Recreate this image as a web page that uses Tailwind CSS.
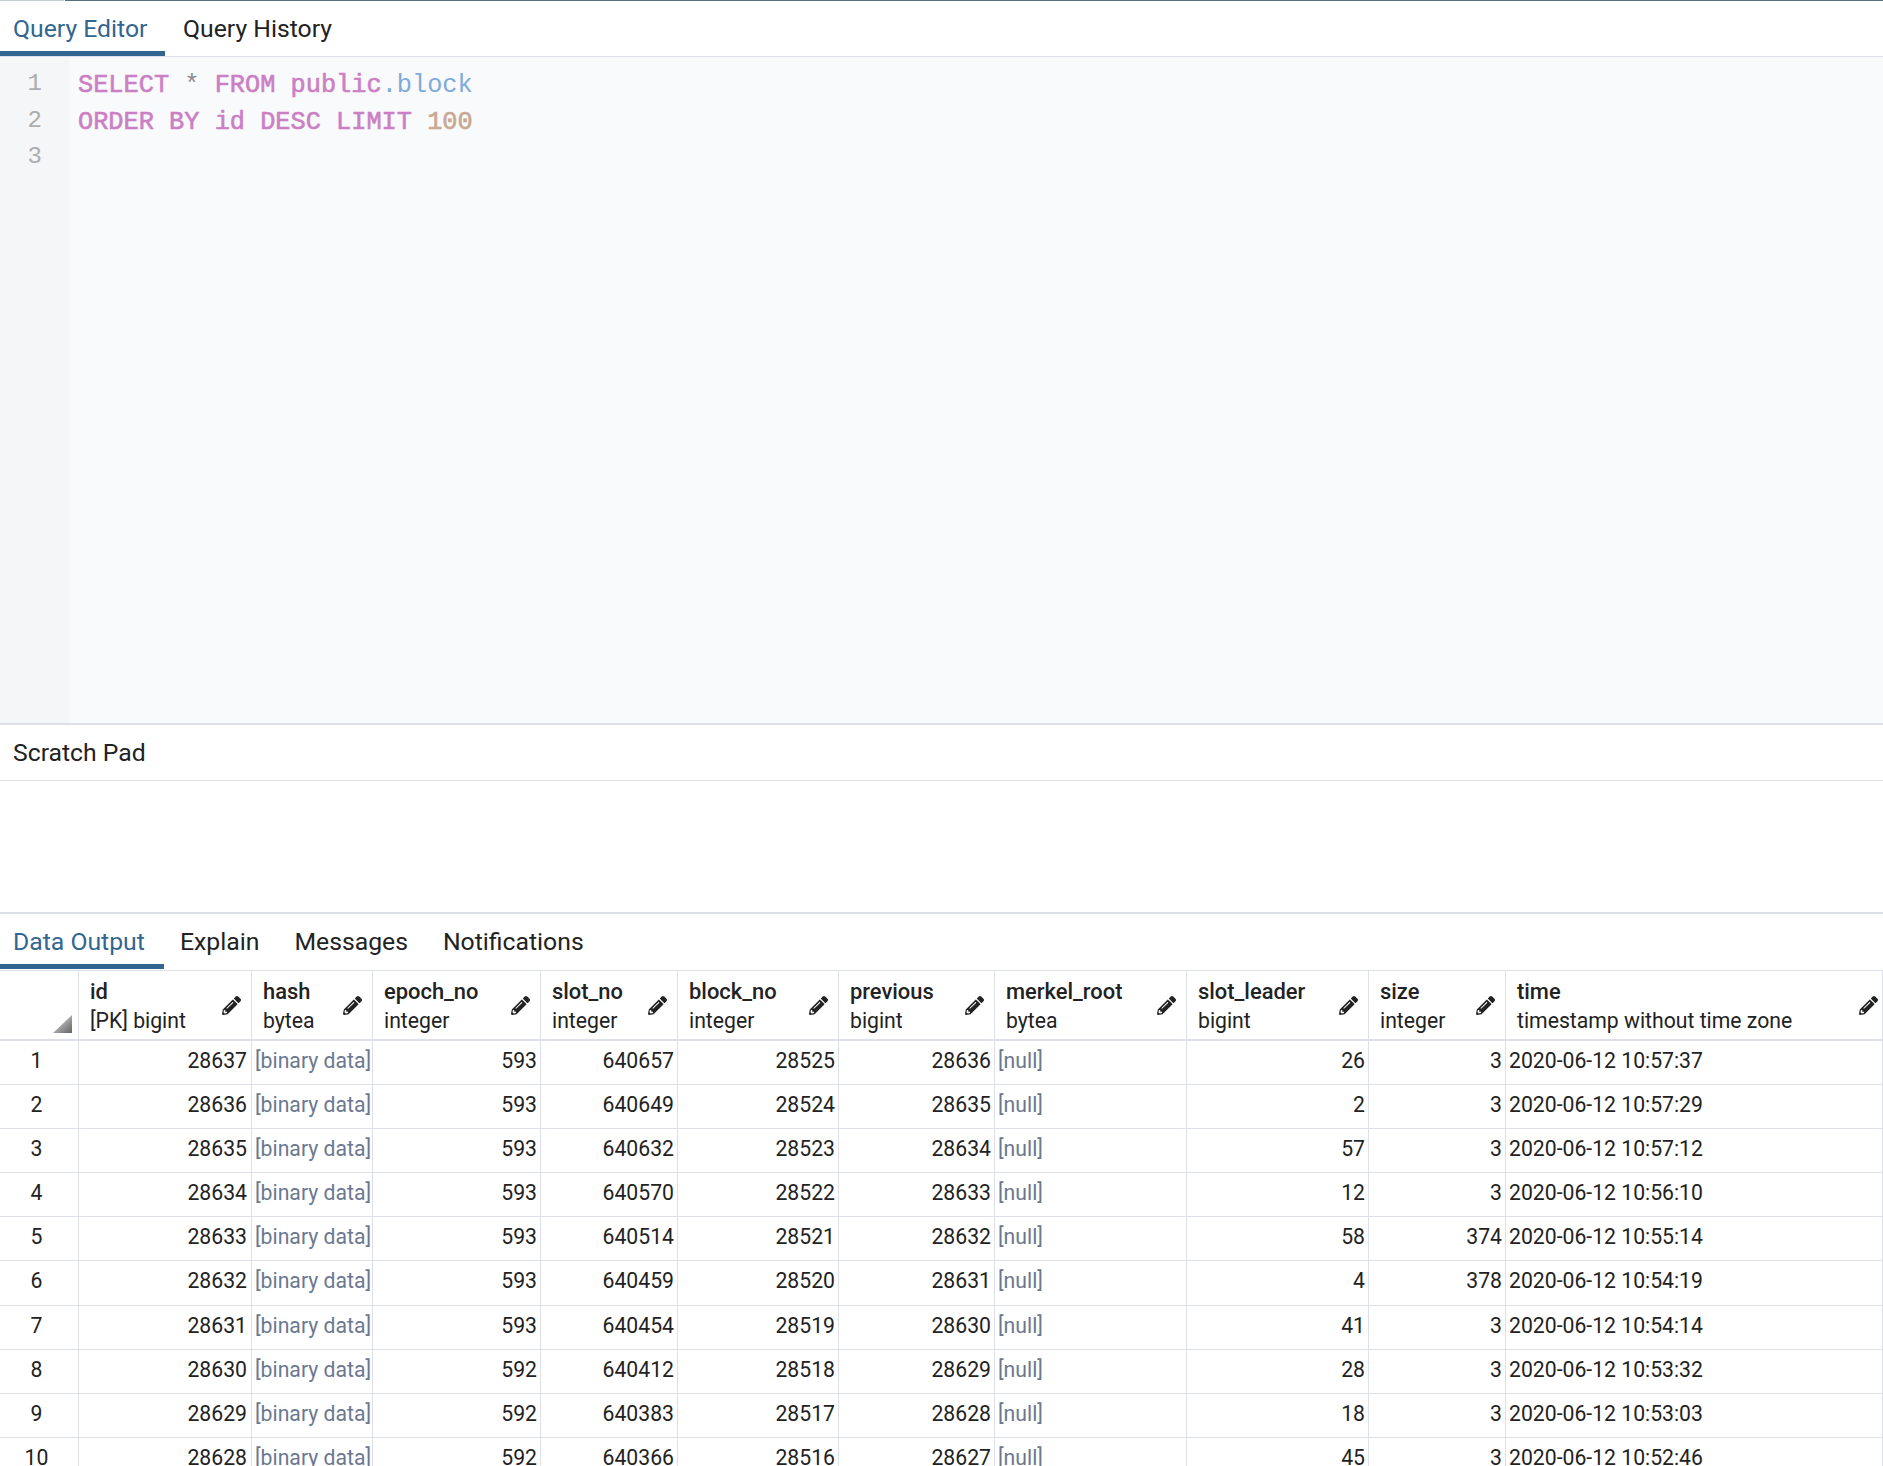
<!DOCTYPE html>
<html lang="en">
<head>
    <meta charset="UTF-8">
    <title>pgAdmin Query Tool</title>
    <script src="https://cdn.jsdelivr.net/npm/@tailwindcss/browser@4"></script>
</head>
<body class="bg-white overflow-hidden">
    <div class="w-[1883px] h-[1466px] overflow-hidden flex flex-col font-['Roboto',sans-serif] text-[#222222]">
        <!-- Top rule -->
        <div class="h-px shrink-0 flex">
            <div class="w-[64px] bg-[#c5ced6]"></div>
            <div class="w-px bg-white"></div>
            <div class="flex-1 bg-[#56707f]"></div>
        </div>

        <!-- Query tabs -->
        <div class="h-[56px] shrink-0 flex border-b border-[#dde0e8] text-[24.75px] leading-[56px]">
            <div class="w-[165px] h-[55px] pl-[13px] text-[#326690] border-b-[5px] border-[#326690] whitespace-nowrap">Query Editor</div>
            <div class="pl-[18px] h-[54px]">Query History</div>
        </div>

        <!-- Editor -->
        <div class="h-[666px] shrink-0 flex bg-[#f9fafc] font-['Liberation_Mono',monospace] text-[25.3px] leading-[36.5px]">
            <div class="w-[69px] bg-[#f5f6f8] pt-[9px] pr-[27px] text-right text-[#adadad] text-[24px]">
                <div>1</div>
                <div>2</div>
                <div>3</div>
            </div>
            <div class="pl-[9px] pt-[11px] text-[#cb7fc4] [-webkit-text-stroke:0.6px]">
                <div>SELECT <span class="text-[#8a8a8a] [-webkit-text-stroke:0px]">*</span> FROM public<span class="text-[#80abd8] [-webkit-text-stroke:0px]">.block</span></div>
                <div>ORDER BY id DESC LIMIT <span class="text-[#c7a892]">100</span></div>
            </div>
        </div>

        <!-- Scratch pad -->
        <div class="h-[58px] shrink-0 border-t-2 border-b border-[#dde0e8] pl-[13px] text-[24.75px] leading-[56px]">Scratch Pad</div>
        <div class="h-[131px] shrink-0"></div>

        <!-- Result tabs -->
        <div class="h-[58px] shrink-0 flex border-t-2 border-[#dde0e8] text-[24.75px] leading-[55px]">
            <div class="w-[164px] h-[55px] pl-[13px] text-[#326690] border-b-[5px] border-[#326690] whitespace-nowrap">Data Output</div>
            <div class="pl-[16px]">Explain</div>
            <div class="pl-[35px]">Messages</div>
            <div class="pl-[35px]">Notifications</div>
        </div>

        <!-- Data grid -->
        <table class="table-fixed w-[1883px] border-separate border-spacing-0 text-[21.2px]">
            <colgroup id="cols"></colgroup>
            <thead>
                <tr id="head" class="h-[71px]"></tr>
            </thead>
            <tbody id="rows"></tbody>
        </table>
    </div>

    <script>
        const widths = [79, 173, 121, 168, 137, 161, 156, 192, 182, 137, 377];
        const columns = [
            ['id', '[PK] bigint'], ['hash', 'bytea'], ['epoch_no', 'integer'], ['slot_no', 'integer'],
            ['block_no', 'integer'], ['previous', 'bigint'], ['merkel_root', 'bytea'], ['slot_leader', 'bigint'],
            ['size', 'integer'], ['time', 'timestamp without time zone']
        ];
        const data = [
            [28637, 593, 640657, 28525, 28636, 26, 3, '10:57:37'],
            [28636, 593, 640649, 28524, 28635, 2, 3, '10:57:29'],
            [28635, 593, 640632, 28523, 28634, 57, 3, '10:57:12'],
            [28634, 593, 640570, 28522, 28633, 12, 3, '10:56:10'],
            [28633, 593, 640514, 28521, 28632, 58, 374, '10:55:14'],
            [28632, 593, 640459, 28520, 28631, 4, 378, '10:54:19'],
            [28631, 593, 640454, 28519, 28630, 41, 3, '10:54:14'],
            [28630, 592, 640412, 28518, 28629, 28, 3, '10:53:32'],
            [28629, 592, 640383, 28517, 28628, 18, 3, '10:53:03'],
            [28628, 592, 640366, 28516, 28627, 45, 3, '10:52:46']
        ];

        const pencil = `<svg viewBox="0 0 512 512" class="w-[19px] h-[19px] shrink-0 -mt-[2px] fill-[#222222]"><path d="M497.9 142.1l-46.1 46.1c-4.7 4.7-12.3 4.7-17 0l-111-111c-4.7-4.7-4.7-12.3 0-17l46.1-46.1c18.7-18.7 49.1-18.7 67.9 0l60.1 60.1c18.8 18.7 18.8 49.1 0 67.9zM284.2 99.8L21.6 362.4.4 483.9c-2.9 16.4 11.4 30.6 27.8 27.8l121.5-21.3 262.6-262.6c4.3-4.3 4.3-11.3 0-15.6l-112.1-112.1c-4.7-4.3-11.7-4.3-16 0zM124.1 339.9c-5.5-5.5-5.5-14.3 0-19.8l154-154c5.5-5.5 14.3-5.5 19.8 0s5.5 14.3 0 19.8l-154 154c-5.5 5.5-14.3 5.5-19.8 0zM88 424h48v36.3l-64.5 11.3-31.1-31.1L51.7 376H88v48z"/></svg>`;
        const corner = `<svg viewBox="0 0 19 18" class="w-[19px] h-[18px] ml-auto"><defs><linearGradient id="fade" x1="0" y1="0" x2="1" y2="1"><stop offset="0.4" stop-color="#b4b4b4"/><stop offset="0.8" stop-color="#7c7c7c"/><stop offset="1" stop-color="#666666"/></linearGradient></defs><path d="M19 0V18H0Z" fill="url(#fade)"/></svg>`;

        document.getElementById('cols').innerHTML = widths.map(w => `<col style="width:${w}px">`).join('');

        const headCell = 'border-r border-t border-b-2 border-[#dde0e8]';
        document.getElementById('head').innerHTML =
            `<th class="${headCell} align-bottom pr-[6px] pb-[6px]">${corner}</th>` +
            columns.map(([name, type], i) =>
                `<th class="${headCell} text-left font-normal pl-[11px] ${i === 9 ? 'pr-[4px]' : 'pr-[10px]'}">
                    <div class="flex items-center justify-between pt-[2px]">
                        <div class="whitespace-nowrap leading-[29px]">
                            <div class="font-medium text-[21.9px]">${name}</div>
                            <div>${type}</div>
                        </div>
                        ${pencil}
                    </div>
                </th>`).join('');

        const cell = 'border-r border-b border-[#dde0e8] align-top pt-[4px]';
        const num = `${cell} text-right pr-[3px]`;
        const txt = `${cell} text-left pl-[3px] text-[#6b7890]`;
        document.getElementById('rows').innerHTML = data.map((r, i) =>
            `<tr class="h-[44.1px]">
                <td class="${cell} text-center pr-[5px]">${i + 1}</td>
                <td class="${cell} text-right pr-[4px]">${r[0]}</td>
                <td class="${txt}">[binary data]</td>
                <td class="${num}">${r[1]}</td>
                <td class="${num}">${r[2]}</td>
                <td class="${num}">${r[3]}</td>
                <td class="${num}">${r[4]}</td>
                <td class="${txt}">[null]</td>
                <td class="${num}">${r[5]}</td>
                <td class="${num}">${r[6]}</td>
                <td class="${cell} text-left pl-[3px]">2020-06-12 ${r[7]}</td>
            </tr>`).join('');
    </script>
</body>
</html>
